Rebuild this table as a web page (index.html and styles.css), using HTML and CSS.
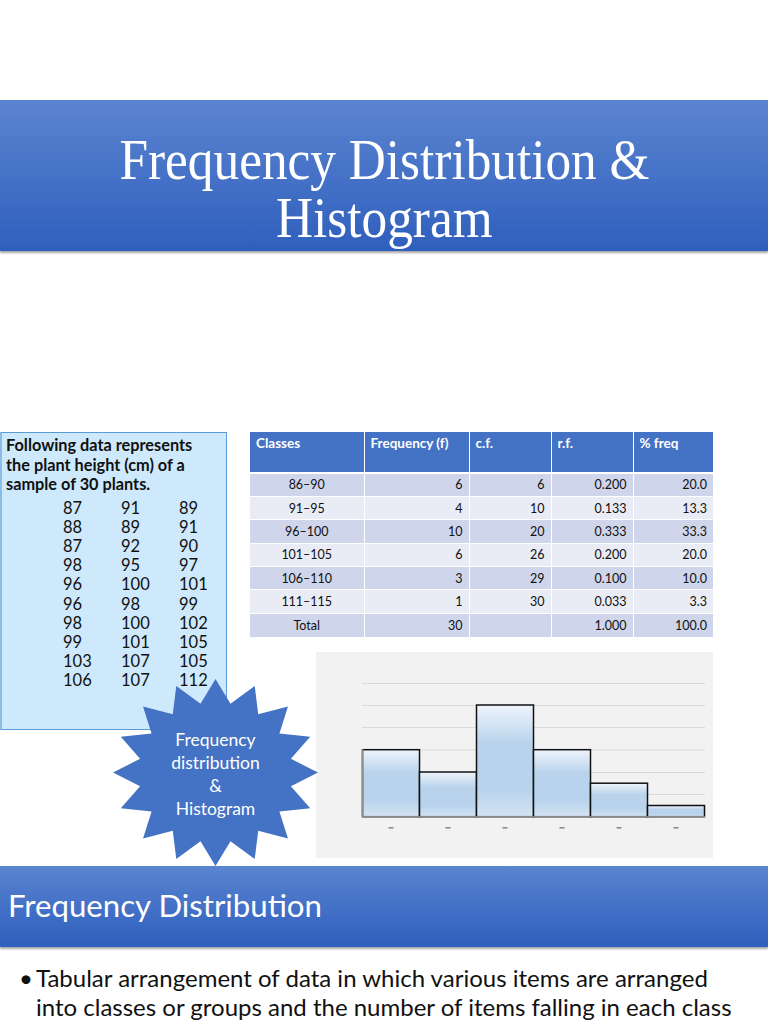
FILE: index.html
```html
<!DOCTYPE html>
<html>
<head>
<meta charset="utf-8">
<link rel="stylesheet" href="styles.css">
</head>
<body>
<div class="page">
  <header class="title-bar">
    <h1 class="title"><span class="title-line">Frequency Distribution &amp;</span><span class="title-line">Histogram</span></h1>
  </header>

  <section class="mid">
    <div class="data-box">
      <p class="data-intro">Following data represents the plant height (cm) of a sample of 30 plants.</p>
      <div class="data-grid">
        <span>87</span><span>91</span><span>89</span>
        <span>88</span><span>89</span><span>91</span>
        <span>87</span><span>92</span><span>90</span>
        <span>98</span><span>95</span><span>97</span>
        <span>96</span><span>100</span><span>101</span>
        <span>96</span><span>98</span><span>99</span>
        <span>98</span><span>100</span><span>102</span>
        <span>99</span><span>101</span><span>105</span>
        <span>103</span><span>107</span><span>105</span>
        <span>106</span><span>107</span><span>112</span>
      </div>
    </div>

    <div class="right-col">
      <table class="freq-table">
        <thead>
          <tr><th>Classes</th><th>Frequency (f)</th><th>c.f.</th><th>r.f.</th><th>% freq</th></tr>
        </thead>
        <tbody>
          <tr class="dark"><td class="c">86–90</td><td>6</td><td>6</td><td>0.200</td><td>20.0</td></tr>
          <tr class="light"><td class="c">91–95</td><td>4</td><td>10</td><td>0.133</td><td>13.3</td></tr>
          <tr class="dark"><td class="c">96–100</td><td>10</td><td>20</td><td>0.333</td><td>33.3</td></tr>
          <tr class="light"><td class="c">101–105</td><td>6</td><td>26</td><td>0.200</td><td>20.0</td></tr>
          <tr class="dark"><td class="c">106–110</td><td>3</td><td>29</td><td>0.100</td><td>10.0</td></tr>
          <tr class="light"><td class="c">111–115</td><td>1</td><td>30</td><td>0.033</td><td>3.3</td></tr>
          <tr class="dark"><td class="c">Total</td><td>30</td><td></td><td>1.000</td><td>100.0</td></tr>
        </tbody>
      </table>

      <div class="chart">
        <svg class="chart-svg" width="397" height="206" viewBox="0 0 397 206">
          <defs>
            <linearGradient id="barGrad" x1="0" y1="0" x2="0" y2="1">
              <stop offset="0" stop-color="#eef4fb"/>
              <stop offset="0.35" stop-color="#b9d3ec"/>
              <stop offset="0.75" stop-color="#b9d3ec"/>
              <stop offset="1" stop-color="#d3e3f3"/>
            </linearGradient>
          </defs>
          <g stroke="#d9d9d9" stroke-width="1">
            <line x1="46" y1="31.5" x2="389" y2="31.5"/>
            <line x1="46" y1="53.5" x2="389" y2="53.5"/>
            <line x1="46" y1="75.5" x2="389" y2="75.5"/>
            <line x1="46" y1="98" x2="389" y2="98"/>
            <line x1="46" y1="120.5" x2="389" y2="120.5"/>
            <line x1="46" y1="142.5" x2="389" y2="142.5"/>
          </g>
          <g fill="url(#barGrad)" stroke="#111" stroke-width="1.5">
            <rect x="46.5" y="97.7" width="57" height="67"/>
            <rect x="103.5" y="120" width="57" height="44.7"/>
            <rect x="160.5" y="53" width="57" height="111.7"/>
            <rect x="217.5" y="97.7" width="57" height="67"/>
            <rect x="274.5" y="131.2" width="57" height="33.5"/>
            <rect x="331.5" y="153.5" width="57" height="11.2"/>
          </g>
          <line x1="46" y1="164.7" x2="389" y2="164.7" stroke="#a6a6a6" stroke-width="1"/>
          <line x1="46.5" y1="97" x2="46.5" y2="165" stroke="#8c8c8c" stroke-width="1.5"/>
          <g fill="#8c8c8c">
            <rect x="72.5" y="175" width="5" height="1.6"/>
            <rect x="129.5" y="175" width="5" height="1.6"/>
            <rect x="186.5" y="175" width="5" height="1.6"/>
            <rect x="243.5" y="175" width="5" height="1.6"/>
            <rect x="300.5" y="175" width="5" height="1.6"/>
            <rect x="357.5" y="175" width="5" height="1.6"/>
          </g>
        </svg>
      </div>
    </div>

    <div class="star">
      <svg class="star-svg" viewBox="0 0 200 200" preserveAspectRatio="none">
        <polygon fill="#4472c4" points="100,0 114.63,26.44 138.27,7.61 141.67,37.64 170.71,29.29 162.36,58.33 192.39,61.73 173.56,85.37 200,100 173.56,114.63 192.39,138.27 162.36,141.67 170.71,170.71 141.67,162.36 138.27,192.39 114.63,173.56 100,200 85.37,173.56 61.73,192.39 58.33,162.36 29.29,170.71 37.64,141.67 7.61,138.27 26.44,114.63 0,100 26.44,85.37 7.61,61.73 37.64,58.33 29.29,29.29 58.33,37.64 61.73,7.61 85.37,26.44"/>
      </svg>
      <div class="star-text">Frequency<br>distribution<br>&amp;<br>Histogram</div>
    </div>
  </section>

  <section class="sub-bar">
    <h2 class="sub-title">Frequency Distribution</h2>
  </section>

  <ul class="bullets">
    <li>Tabular arrangement of data in which various items are arranged into classes or groups and the number of items falling in each class</li>
  </ul>
</div>
</body>
</html>
```

FILE: styles.css
```css
* { box-sizing: border-box; }

html, body {
  margin: 0;
  padding: 0;
  background: #ffffff;
}

body {
  font-family: Lato, "Open Sans", "Liberation Sans", sans-serif;
  color: #000;
  width: 768px;
  height: 1024px;
  overflow: hidden;
}

.page {
  padding-top: 100px;
}

.title-bar {
  height: 151px;
  background: linear-gradient(180deg, #5b84d0 0%, #4a76c9 40%, #2f5fbd 100%);
  box-shadow: 0 2px 2px rgba(0, 0, 0, 0.35);
  display: flex;
  justify-content: center;
  align-items: flex-start;
}

.title {
  margin: 0;
  padding-top: 31px;
  font-family: "Liberation Serif", "Times New Roman", serif;
  font-weight: normal;
  font-size: 57px;
  line-height: 58px;
  color: #fff;
  display: flex;
  flex-direction: column;
  align-items: center;
  gap: 0;
}

.title-line {
  display: block;
  height: 58px;
  white-space: nowrap;
  transform: scaleX(0.9);
}

.mid {
  position: relative;
  margin-top: 181px;
  display: flex;
  align-items: flex-start;
  height: 434px;
}

.data-box {
  width: 227px;
  height: 298px;
  background: #cde9fb;
  border: 1px solid #5b9bd5;
  border-left: 2px solid #8cbde6;
  padding: 2px 0 0 4px;
}

.data-intro {
  margin: 0;
  max-width: 200px;
  font-weight: bold;
  font-size: 16.3px;
  line-height: 19.5px;
  color: #111;
}

.data-grid {
  margin: 5px 0 0 57px;
  display: grid;
  grid-template-columns: 58px 58px 58px;
  font-size: 16.5px;
  line-height: 19.2px;
  color: #111;
}

.right-col {
  margin-left: 23px;
  display: flex;
  flex-direction: column;
}

.freq-table {
  border-collapse: collapse;
  width: 463px;
  font-size: 12.5px;
  color: #111;
}

.freq-table th {
  background: #4472c4;
  color: #fff;
  font-weight: bold;
  font-size: 13.5px;
  text-align: left;
  vertical-align: top;
  height: 41px;
  padding: 3px 6px 0 6px;
  border-left: 1px solid #fff;
  border-bottom: 2px solid #fff;
}

.freq-table th:first-child { border-left: none; width: 114px; }
.freq-table th:nth-child(2) { width: 105px; }
.freq-table th:nth-child(3) { width: 82px; }
.freq-table th:nth-child(4) { width: 82px; }

.freq-table td {
  height: 23.4px;
  padding: 0 6px;
  text-align: right;
  border-left: 1px solid #fff;
  border-top: 1px solid #fff;
}

.freq-table td:first-child { border-left: none; }
.freq-table td.c { text-align: center; }

.freq-table tr.dark td { background: #cfd5ea; }
.freq-table tr.light td { background: #e9ebf5; }

.chart {
  margin: 15px 0 0 66px;
  width: 397px;
  height: 206px;
  background: #f2f2f2;
}

.chart-svg { display: block; }

.star {
  position: absolute;
  left: 113px;
  top: 247px;
  width: 205px;
  height: 187px;
}

.star-svg {
  position: absolute;
  inset: 0;
  width: 100%;
  height: 100%;
}

.star-text {
  position: absolute;
  inset: 0;
  display: flex;
  align-items: center;
  justify-content: center;
  text-align: center;
  color: #fff;
  font-size: 17.5px;
  line-height: 23px;
  padding-top: 2px;
}

.sub-bar {
  height: 81px;
  background: linear-gradient(180deg, #5b84d0 0%, #4673c8 45%, #2f5fbd 100%);
  box-shadow: 0 2px 2px rgba(0, 0, 0, 0.35);
  padding: 21px 0 0 8px;
}

.sub-title {
  margin: 0;
  font-weight: normal;
  font-size: 31.2px;
  line-height: 36px;
  color: #fff;
}

.bullets {
  margin: 16px 0 0 0;
  padding: 0 30px 0 36px;
  list-style: none;
  font-size: 24px;
  line-height: 29px;
  color: #111;
}

.bullets li {
  position: relative;
}

.bullets li::before {
  content: "•";
  position: absolute;
  left: -17px;
  top: 0;
}
```
